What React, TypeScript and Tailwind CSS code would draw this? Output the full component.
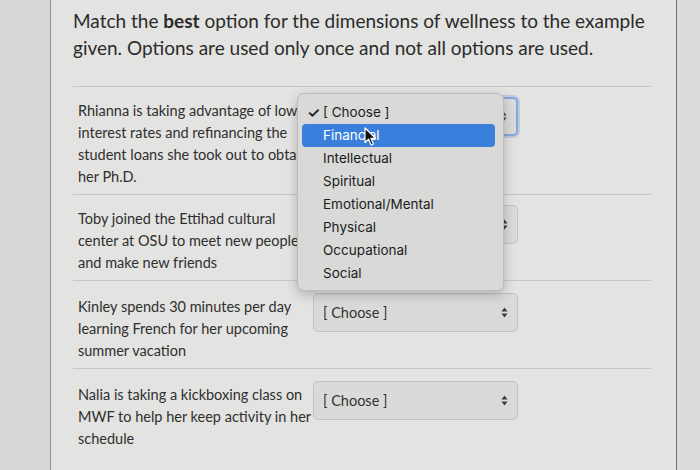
import React from "react";

const lato = { fontFamily: "Lato, 'Open Sans', sans-serif" };
const sys = { fontFamily: "Inter, 'Noto Sans', sans-serif" };

type Item = { lines: string[]; focused?: boolean };

const items: Item[] = [
  {
    lines: [
      "Rhianna is taking advantage of lower",
      "interest rates and refinancing the",
      "student loans she took out to obtain",
      "her Ph.D.",
    ],
    focused: true,
  },
  {
    lines: [
      "Toby joined the Ettihad cultural",
      "center at OSU to meet new people",
      "and make new friends",
    ],
  },
  {
    lines: [
      "Kinley spends 30 minutes per day",
      "learning French for her upcoming",
      "summer vacation",
    ],
  },
  {
    lines: [
      "Nalia is taking a kickboxing class on",
      "MWF to help her keep activity in her",
      "schedule",
    ],
  },
];

const options = [
  "Financial",
  "Intellectual",
  "Spiritual",
  "Emotional/Mental",
  "Physical",
  "Occupational",
  "Social",
];

function Arrows() {
  return (
    <svg width="7" height="11" viewBox="0 0 7 11">
      <path d="M3.5 0.5 L6.5 4.5 H0.5 Z M3.5 10.5 L6.5 6.5 H0.5 Z" fill="#3c3c3c" />
    </svg>
  );
}

function Pointer() {
  return (
    <svg width="13" height="19" viewBox="0 0 13 19">
      <path
        d="M1 1 L1 15.5 L4.6 12.2 L7.2 18 L9.4 17 L6.9 11.3 L11.6 11.3 Z"
        fill="#111"
        stroke="#fff"
        strokeWidth="1.2"
        strokeLinejoin="round"
      />
    </svg>
  );
}

function Menu() {
  return (
    <div
      className="absolute left-[-16px] top-[-4px] w-[207px] h-[198px] rounded-[7px] bg-[#d9d9d8] border border-[#bdbdbc] shadow-[0_4px_12px_rgba(0,0,0,0.22)] z-10 pl-[4px] pr-[8px] pt-[7px] text-[13.5px] text-[#1c1c1c]"
      style={sys}
    >
      <div className="flex items-center h-[23px] pl-[5px]">
        <span className="w-[16px] text-[15px] font-semibold leading-none">✓</span>
        <span>[ Choose ]</span>
      </div>
      <div className="relative flex items-center h-[23px] rounded-[4px] bg-[#3a7fdc] text-white pl-[21px]">
        Financial
        <div className="absolute left-[62px] top-[3px]">
          <Pointer />
        </div>
      </div>
      {options.slice(1).map((o) => (
        <div key={o} className="flex items-center h-[23px] pl-[21px]">
          {o}
        </div>
      ))}
    </div>
  );
}

function Select({ focused }: { focused?: boolean }) {
  return (
    <div className="relative mt-[-3px]">
      <div
        className={
          "w-[205px] h-[39px] rounded-[5px] bg-[#dadad8] flex items-center justify-between pl-[9px] pr-[9px] text-[14.5px] text-[#333] " +
          (focused
            ? "border-2 border-[#8aa6da] shadow-[0_0_0_2px_rgba(140,170,220,0.45)]"
            : "border border-[#c2c2c0]")
        }
        style={lato}
      >
        <span>[ Choose ]</span>
        <Arrows />
      </div>
      {focused && <Menu />}
    </div>
  );
}

export default function App() {
  return (
    <div className="w-[700px] h-[470px] overflow-hidden flex bg-[#dcdcda]" style={lato}>
      <div className="w-[51px] shrink-0 bg-[#d8d8d6] border-r border-[#8d8d8b]" />
      <div className="w-[626px] shrink-0 bg-[#e3e3e1] border-r border-[#6f6f6d] pl-[22px] pr-[25px] pt-[7px]">
        <p className="text-[19px] leading-[27px] text-[#2b2b2b] mb-[25px] whitespace-nowrap">
          Match the <b>best</b> option for the dimensions of wellness to the example
          <br />
          given. Options are used only once and not all options are used.
        </p>
        {items.map((it, i) => (
          <div
            key={i}
            className={
              "border-t border-[#c6c6c4] pb-[6px] pl-[5px] flex " +
              (i < 2 ? "pt-[13px]" : "pt-[15px]")
            }
          >
            <div className="w-[235px] shrink-0 text-[14.5px] leading-[22px] text-[#2f2f2f] whitespace-nowrap overflow-hidden">
              {it.lines.map((l) => (
                <div key={l}>{l}</div>
              ))}
            </div>
            <Select focused={it.focused} />
          </div>
        ))}
      </div>
      <div className="flex-1" />
    </div>
  );
}
